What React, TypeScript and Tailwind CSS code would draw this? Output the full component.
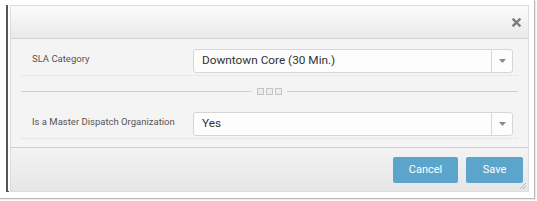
import React from "react";

/* small pieces */
function CloseIcon() {
  return (
    <svg width="9" height="9" viewBox="0 0 9 9">
      <path d="M1.5 1.5 L7.5 7.5 M7.5 1.5 L1.5 7.5" stroke="#7a7a7a" strokeWidth="2.4" strokeLinecap="square" />
    </svg>
  );
}

function Select({ value }: { value: string }) {
  return (
    <div className="flex h-[24px] w-[320px] items-stretch rounded-[3px] border border-[#d6d6d6] bg-[#fdfdfd]">
      <div className="flex flex-1 items-center pl-[8px] text-[11.8px] text-[#333]">{value}</div>
      <div className="flex w-[21px] items-center justify-center border-l border-[#d6d6d6]">
        <svg width="7" height="4" viewBox="0 0 7 4">
          <path d="M0 0 L7 0 L3.5 4 Z" fill="#8a8a8a" />
        </svg>
      </div>
    </div>
  );
}

function Row({ label, value, top }: { label: string; value: string; top: string }) {
  return (
    <div className={`mx-[10px] flex items-center border-b border-dotted border-[#dcdcdc] pb-[2px] ${top}`}>
      <div className="w-[172px] pb-[3px] pl-[11px] text-[9.5px] text-[#555]">{label}</div>
      <Select value={value} />
    </div>
  );
}

export default function App() {
  return (
    <div className="h-[201px] w-[537px] bg-white" style={{ fontFamily: "Roboto, 'Liberation Sans', sans-serif" }}>
      <div className="h-[199px] w-[535px] border-r border-b border-[#b9b9b9] pl-[6px] pt-[5px] shadow-[1px_1px_1px_rgba(0,0,0,0.08)]">
        <div className="flex h-[187px] gap-[2px]">
          {/* dark edge */}
          <div className="flex w-[2px] flex-col">
            <div className="flex-1 bg-[#555]" />
            <div className="h-[1px] w-[3px] bg-[#555]" />
          </div>

          {/* dialog */}
          <div className="relative flex w-[519px] flex-col border border-[#dcdcdc] bg-[#f4f4f4]">
            {/* header */}
            <div className="flex h-[33px] items-center justify-end border-b border-[#d2d2d2] bg-gradient-to-b from-[#fbfbfb] to-[#e9e9e9] pr-[7px] pt-[1px]">
              <CloseIcon />
            </div>

            {/* body */}
            <div className="flex flex-col">
              <Row label="SLA Category" value="Downtown Core (30 Min.)" top="pt-[10px]" />

              <div className="mx-[10px] flex h-[30px] items-center gap-[3px] pt-[1px]">
                <div className="h-px flex-1 bg-[#cfcfcf]" />
                <div className="flex gap-[2px] px-[2px]">
                  <div className="h-[7px] w-[7px] border border-[#c4c4c4] bg-[#ececec]" />
                  <div className="h-[7px] w-[7px] border border-[#c4c4c4] bg-[#ececec]" />
                  <div className="h-[7px] w-[7px] border border-[#c4c4c4] bg-[#ececec]" />
                </div>
                <div className="h-px flex-1 bg-[#cfcfcf]" />
              </div>

              <Row label="Is a Master Dispatch Organization" value="Yes" top="pt-[6px]" />
            </div>

            {/* footer */}
            <div className="mt-auto flex h-[44px] items-center justify-end gap-[8px] border-t border-[#d0d0d0] bg-gradient-to-b from-[#f3f3f3] to-[#e6e6e6] pr-[5px] pt-[1px]">
              <button className="h-[26px] w-[65px] rounded-[2px] bg-[#5ba5cc] text-[11px] text-white">Cancel</button>
              <button className="h-[26px] w-[57px] rounded-[2px] bg-[#5ba5cc] text-[11px] text-white">Save</button>
            </div>

            {/* resize grip */}
            <svg className="absolute right-[1px] bottom-[1px]" width="8" height="8" viewBox="0 0 8 8">
              <path d="M7 1 L1 7 M7 4 L4 7" stroke="#b5b5b5" strokeWidth="1" />
            </svg>
          </div>
        </div>
      </div>
    </div>
  );
}
